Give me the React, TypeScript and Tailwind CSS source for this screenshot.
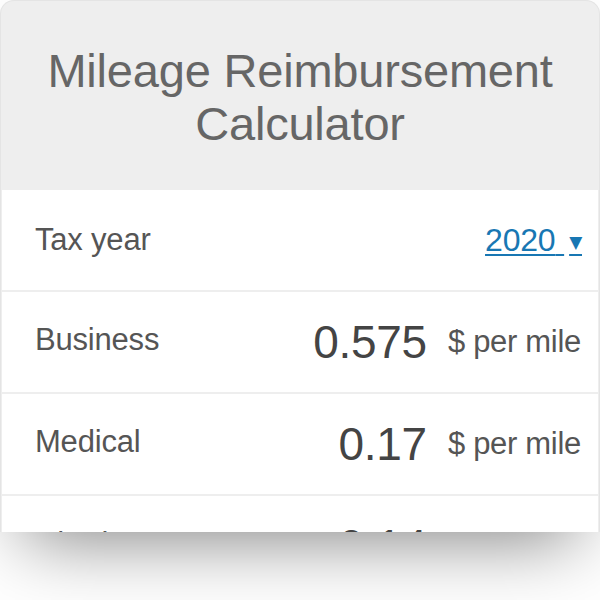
import React from "react";

type Row = {
  label: string;
  value: string;
};

const rates: Row[] = [
  { label: "Business", value: "0.575" },
  { label: "Medical", value: "0.17" },
  { label: "Charity", value: "0.14" },
];

function RateRow({ label, value }: Row) {
  return (
    <div className="flex h-[100px] shrink-0 items-center justify-between bg-white pl-[33px] pr-[17px]">
      <span className="relative top-[-2px] text-[31px] tracking-[-0.2px] text-[#555]">{label}</span>
      <div className="flex items-center">
        <span className="text-[46px] tracking-[-0.3px] text-[#444]">{value}</span>
        <span className="ml-[21px] text-[31px] tracking-[-0.3px] text-[#555]">$ per mile</span>
      </div>
    </div>
  );
}

export default function App() {
  return (
    <div className="h-[600px] w-[600px] overflow-hidden bg-white font-['Liberation_Sans','Arial',sans-serif]">
      <div className="flex h-[532px] flex-col overflow-hidden rounded-t-[14px] border border-b-0 border-[#e4e4e4] bg-[#eeeeee] px-[1px] shadow-[0_30px_70px_-24px_rgba(0,0,0,0.5)]">
        <div className="shrink-0 px-4 pt-[43px] pb-[40px] text-center text-[47px] leading-[53px] tracking-[-0.2px] text-[#666]">
          Mileage Reimbursement
          <br />
          Calculator
        </div>
        <div className="flex flex-col gap-[2px]">
          <div className="flex h-[100px] shrink-0 items-center justify-between bg-white pl-[33px] pr-[16px]">
            <span className="text-[31px] tracking-[-0.2px] text-[#555]">Tax year</span>
            <span className="text-[32px] tracking-[-0.2px] text-[#1877b3] underline decoration-2 underline-offset-[3px]">
              2020{"\u00a0"}
              <span className="relative top-[-3px] ml-[5px] font-['DejaVu_Sans',sans-serif] text-[17px]">▼</span>
            </span>
          </div>
          {rates.map((r) => (
            <RateRow key={r.label} {...r} />
          ))}
        </div>
      </div>
    </div>
  );
}
